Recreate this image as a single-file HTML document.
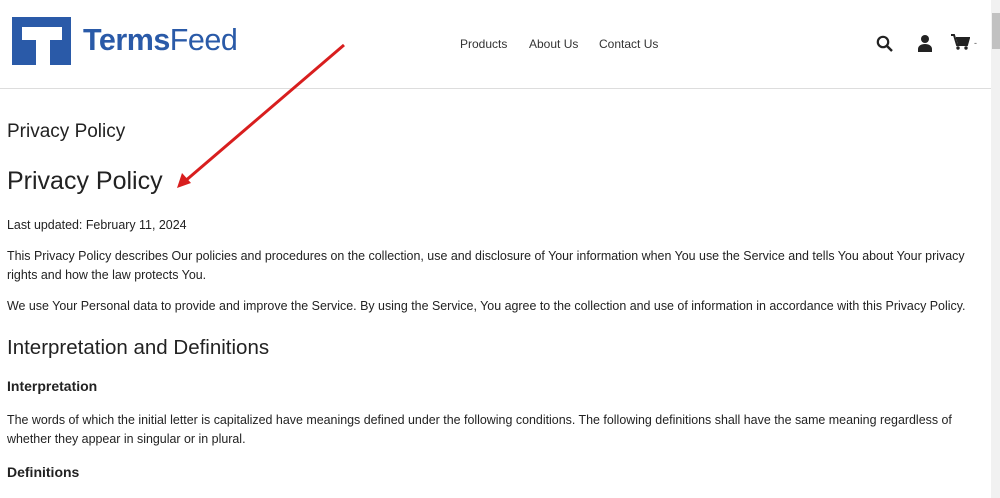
<!DOCTYPE html>
<html><head><style>
body{margin:0;width:1000px;height:498px;overflow:hidden;background:#fff;font-family:"Liberation Sans",sans-serif;color:#222;position:relative}
.hdr{position:absolute;left:0;top:0;width:991px;height:88px;border-bottom:1px solid #ddd}
.logo{position:absolute;left:12px;top:17px;width:59px;height:48px;background:#2a5aa8}
.t1{position:absolute;left:83px;top:23px;font-size:30.5px;color:#2a5aa8;letter-spacing:-0.5px}
.nav{position:absolute;top:37px;font-size:12px;color:#333}
.c{position:absolute;left:7px;font-size:12.45px;color:#222;width:975px;line-height:19px}
.sb{position:absolute;right:0;top:0;width:9px;height:498px;background:#f1f1f1}
</style></head><body>
<div class="hdr">
<div class="logo"><div style="position:absolute;left:10px;top:10px;width:40px;height:13px;background:#fff"></div><div style="position:absolute;left:24px;top:22px;width:14px;height:26px;background:#fff"></div></div>
<div class="t1"><b>Terms</b>Feed</div>
<div class="nav" style="left:460px">Products</div>
<div class="nav" style="left:529px">About Us</div>
<div class="nav" style="left:599px">Contact Us</div>
<svg style="position:absolute;left:876px;top:35px" width="18" height="18" viewBox="0 0 18 18"><circle cx="7" cy="7" r="5.2" fill="none" stroke="#222" stroke-width="2.2"/><path d="M11 11l5 5" stroke="#222" stroke-width="2.4"/></svg>
<svg style="position:absolute;left:916px;top:34px" width="18" height="18" viewBox="0 0 18 18"><circle cx="9" cy="5" r="4" fill="#222"/><path d="M2 18v-3c0-3 3-5 7-5s7 2 7 5v3z" fill="#222"/></svg>
<svg style="position:absolute;left:950px;top:33px" width="20" height="18" viewBox="0 0 20 18"><path d="M1 2h3l3 10h10l2-7H6" fill="none" stroke="#222" stroke-width="2"/><path d="M6 5h13l-2 7H8z" fill="#222"/><circle cx="8" cy="15" r="1.7" fill="#222"/><circle cx="16" cy="15" r="1.7" fill="#222"/></svg>
<div style="position:absolute;left:974px;top:38px;font-size:9px;color:#555">-</div>
</div>
<div class="sb"><div style="position:absolute;left:1px;top:13px;width:8px;height:36px;background:#c1c1c1"></div></div>
<div class="c" style="top:120px;font-size:19px;line-height:24px">Privacy Policy</div>
<div class="c" style="top:166px;font-size:25px;line-height:30px">Privacy Policy</div>
<div class="c" style="top:216px">Last updated: February 11, 2024</div>
<div class="c" style="top:247px">This Privacy Policy describes Our policies and procedures on the collection, use and disclosure of Your information when You use the Service and tells You about Your privacy rights and how the law protects You.</div>
<div class="c" style="top:297px">We use Your Personal data to provide and improve the Service. By using the Service, You agree to the collection and use of information in accordance with this Privacy Policy.</div>
<div class="c" style="top:335px;font-size:20.5px;line-height:25px">Interpretation and Definitions</div>
<div class="c" style="top:377px;font-size:14px;font-weight:bold">Interpretation</div>
<div class="c" style="top:411px">The words of which the initial letter is capitalized have meanings defined under the following conditions. The following definitions shall have the same meaning regardless of whether they appear in singular or in plural.</div>
<div class="c" style="top:463px;font-size:14px;font-weight:bold">Definitions</div>
<svg style="position:absolute;left:0;top:0" width="1000" height="498"><path d="M344 45L184 182" stroke="#d81e1e" stroke-width="3"/><path d="M177 188l5-15 9 10z" fill="#d81e1e"/></svg>
</body></html>
